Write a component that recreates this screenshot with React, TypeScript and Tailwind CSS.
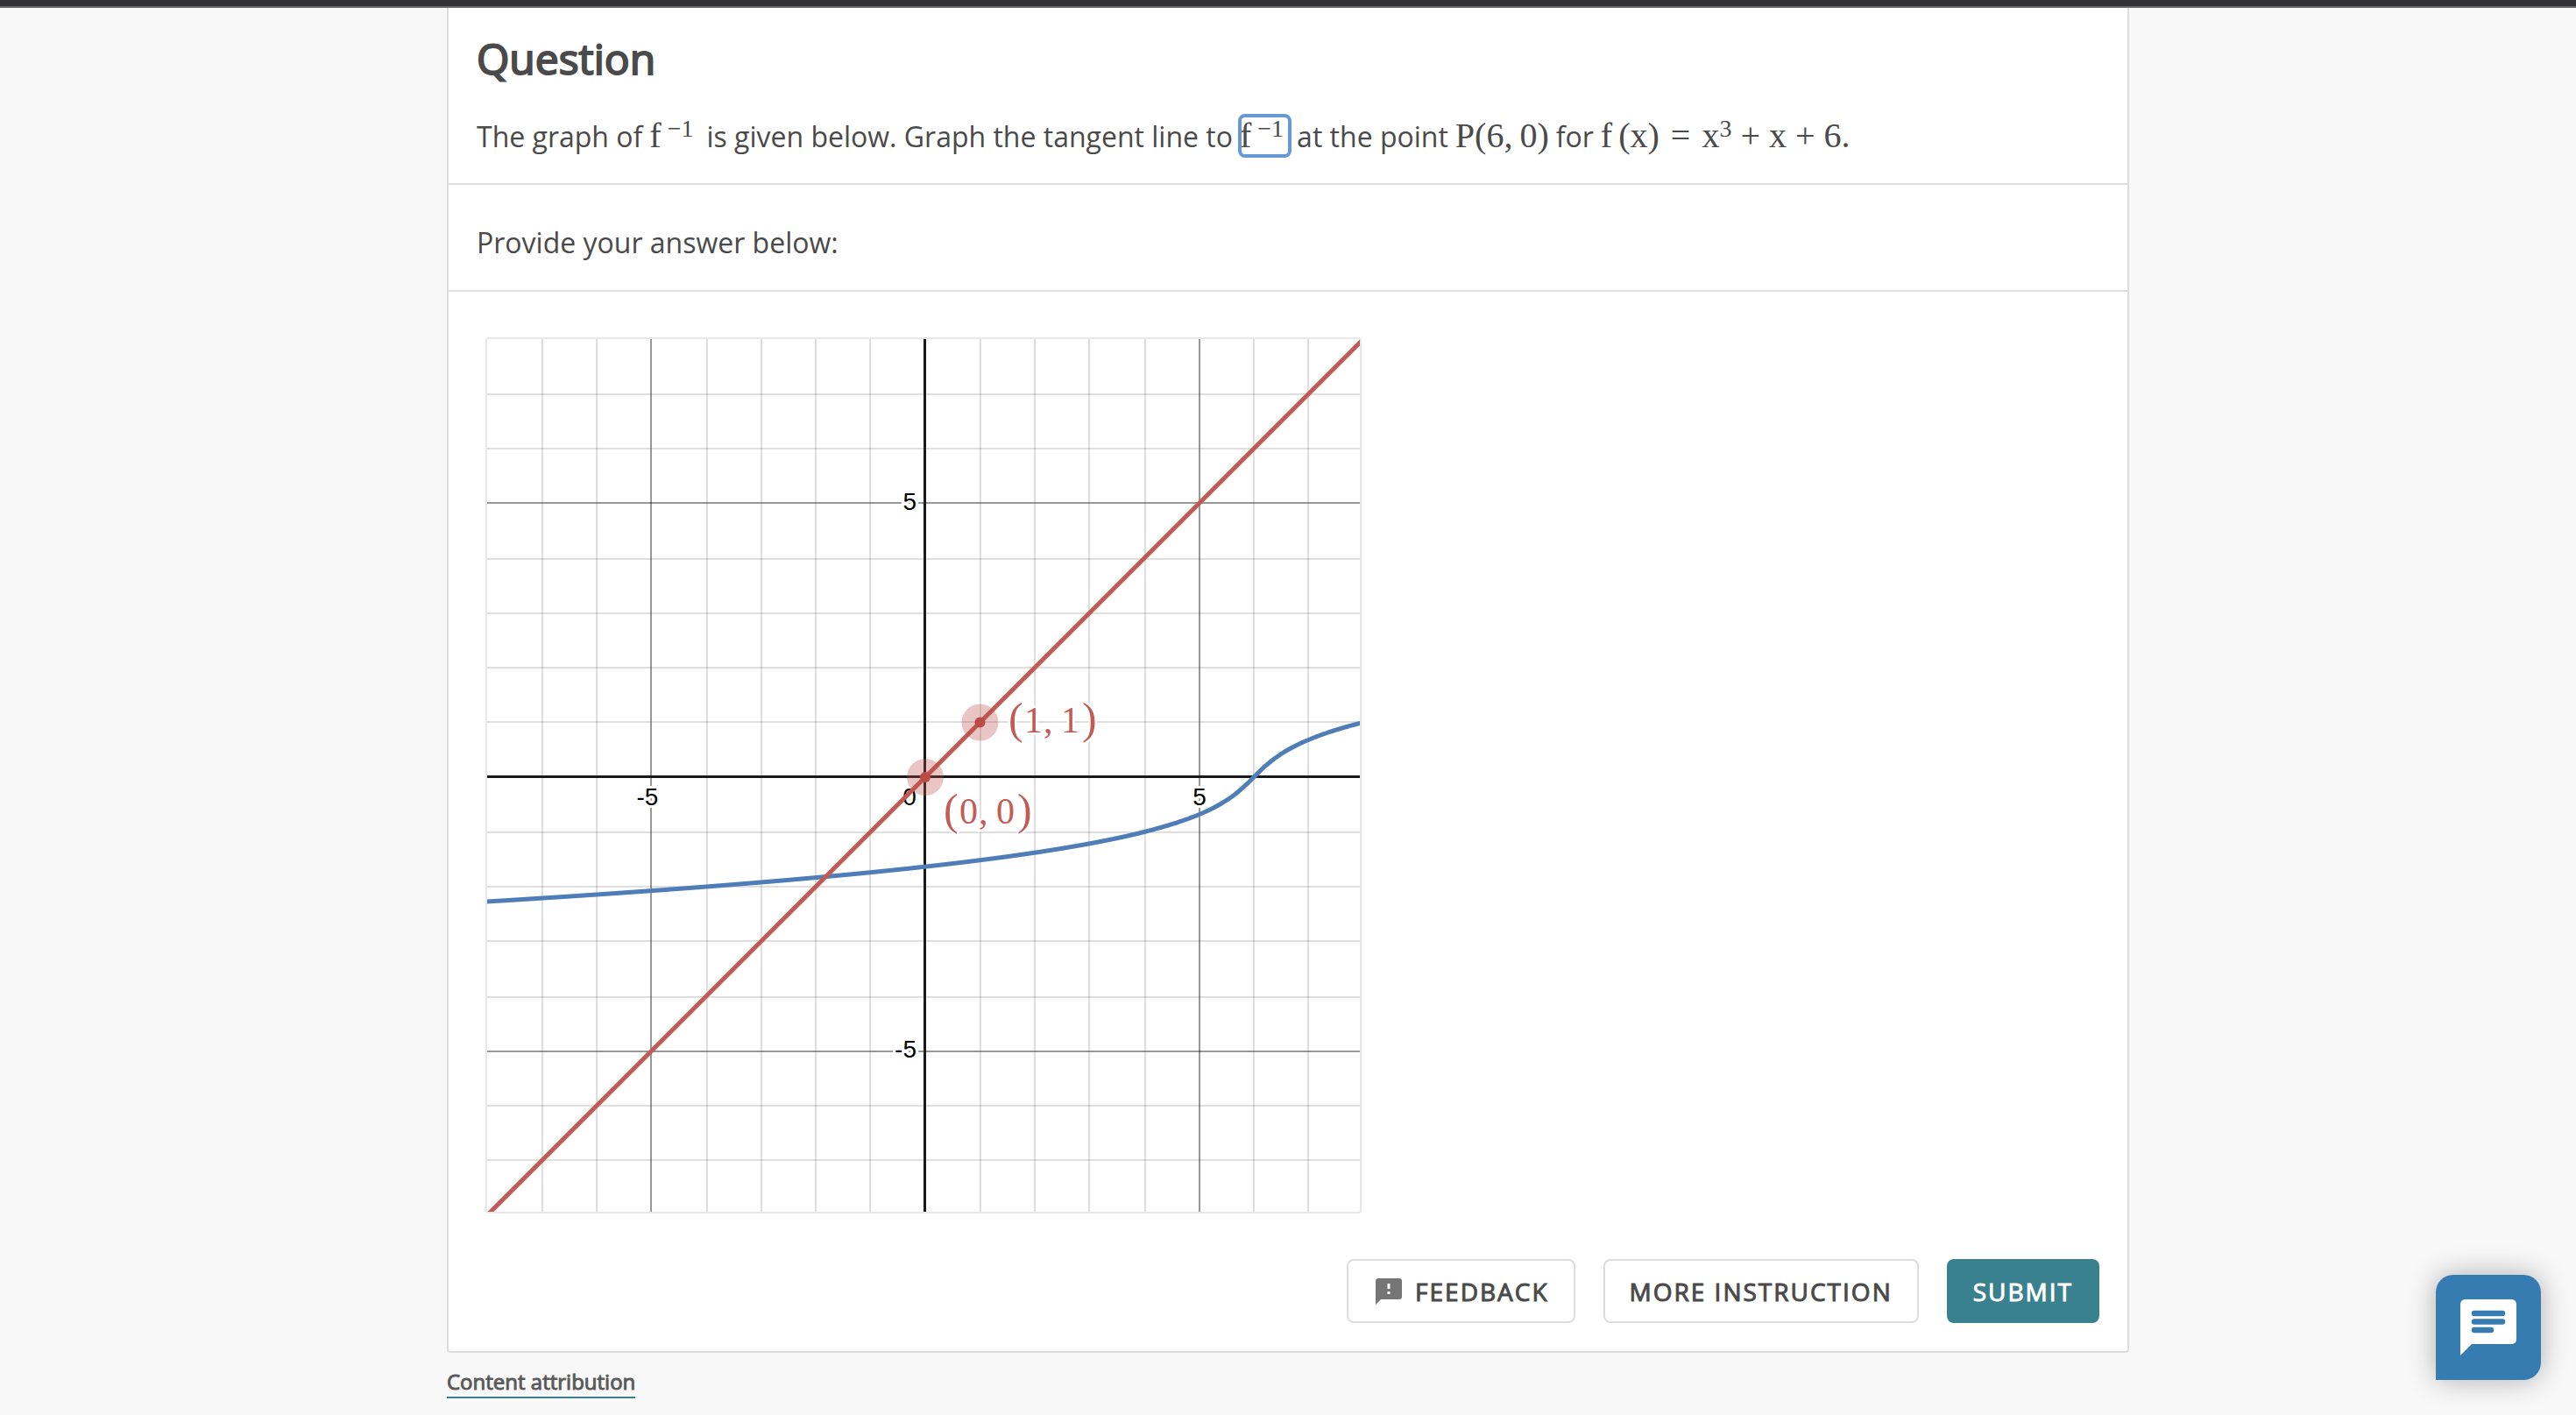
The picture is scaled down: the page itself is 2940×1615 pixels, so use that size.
import { MdFeedback } from 'react-icons/md'

const SIZE = 996
const ORIGIN = 500
const UNIT = 62.5

const toX = (x: number) => ORIGIN + x * UNIT
const toY = (y: number) => ORIGIN - y * UNIT

// grid lines are 2px wide, so keep their centres on odd pixels
const snap = (v: number) => 2 * Math.floor(v / 2) + 1

const TICKS = [-7, -6, -5, -4, -3, -2, -1, 1, 2, 3, 4, 5, 6, 7]

// x = y^3 + y + 6 is the graph of f inverse
function inversePath() {
  const points: string[] = []
  for (let y = -2.4; y <= 1.1; y += 0.02) {
    const x = y ** 3 + y + 6
    points.push(`${toX(x).toFixed(1)} ${toY(y).toFixed(1)}`)
  }
  return `M${points.join('L')}`
}

interface AxisLabelProps {
  x: number
  y: number
  anchor?: 'middle' | 'end'
  children: string
}

function AxisLabel({ x, y, anchor = 'middle', children }: AxisLabelProps) {
  return (
    <text
      x={x}
      y={y}
      textAnchor={anchor}
      className="fill-black stroke-white stroke-[6px] font-['Liberation_Sans',sans-serif] text-[28px] [paint-order:stroke]"
    >
      {children}
    </text>
  )
}

interface PointProps {
  x: number
  y: number
  labelX: number
  labelY: number
}

function Point({ x, y, labelX, labelY }: PointProps) {
  return (
    <g className="fill-[#bc4b45]">
      <circle cx={toX(x)} cy={toY(y)} r={21} opacity={0.32} />
      <circle cx={toX(x)} cy={toY(y)} r={6} />
      <g className="stroke-white stroke-[5px] font-['Liberation_Serif',serif] [paint-order:stroke]" opacity={0.9}>
        <text x={labelX} y={labelY} className="text-[50px]">(</text>
        <text x={labelX + 18} y={labelY - 1} className="text-[42px]">{x}</text>
        <text x={labelX + 40} y={labelY - 1} className="text-[42px]">,</text>
        <text x={labelX + 60} y={labelY - 1} className="text-[42px]">{y}</text>
        <text x={labelX + 84} y={labelY} className="text-[50px]">)</text>
      </g>
    </g>
  )
}

function Graph() {
  return (
    <div className="w-fit rounded-sm border-2 border-[#e8e8e8]">
      <svg
        width={SIZE}
        height={SIZE}
        viewBox={`0 0 ${SIZE} ${SIZE}`}
        role="img"
        aria-label="Graph of the inverse function with a movable line"
        className="block"
      >
        {TICKS.map((t) => (
          <g key={t} stroke="#000" strokeWidth={2} opacity={t % 5 === 0 ? 0.4 : 0.12}>
            <line x1={snap(toX(t))} x2={snap(toX(t))} y1={0} y2={SIZE} />
            <line x1={0} x2={SIZE} y1={snap(toY(t))} y2={snap(toY(t))} />
          </g>
        ))}

        {/* Axes */}
        <path d={`M499.5 0V${SIZE}M0 499.5H${SIZE}`} stroke="#1a1a1a" strokeWidth={3} />
        <AxisLabel x={183} y={532}>-5</AxisLabel>
        <AxisLabel x={482} y={532}>0</AxisLabel>
        <AxisLabel x={813} y={532}>5</AxisLabel>
        <AxisLabel x={490} y={195} anchor="end">5</AxisLabel>
        <AxisLabel x={490} y={820} anchor="end">-5</AxisLabel>

        {/* Curves */}
        <path d={inversePath()} fill="none" stroke="#4f7db8" strokeWidth={5} />
        <line x1={toX(-9)} y1={toY(-9)} x2={toX(9)} y2={toY(9)} stroke="#c15a54" strokeWidth={5} />

        <Point x={1} y={1} labelX={595} labelY={450} />
        <Point x={0} y={0} labelX={521} labelY={554} />
      </svg>
    </div>
  )
}

const mathClass = "font-['Liberation_Serif',serif] text-[40px] leading-[46px]"
const superClass = 'inline-block -translate-y-3 text-[28px] leading-none'

function InverseF() {
  return (
    <>
      f<span className={`${superClass} ml-[7px]`}>−1</span>
    </>
  )
}

function ChatIcon() {
  return (
    <svg viewBox="0 0 64 64" className="size-16" aria-hidden="true">
      <path d="M6 0H58Q64 0 64 6V45Q64 51 58 51H13L0 64V6Q0 0 6 0Z" fill="#fff" />
      <path d="M16 16H48M16 25.5H48M16 35H35" stroke="#377cb1" strokeWidth={6.5} strokeLinecap="round" />
    </svg>
  )
}

const buttonClass =
  'flex h-[73px] cursor-pointer items-center rounded-lg border-2 px-7 text-[28px] tracking-[2px] uppercase [-webkit-text-stroke:1px]'

export default function App() {
  return (
    <div className="min-h-screen bg-[#f8f8f8] font-['Open_Sans',sans-serif] text-[#4a4a4a]">
      <header className="h-[9px] border-b-2 border-[#666a6c] bg-[#343438]" />

      <main className="mx-auto max-w-[1920px]">
        <div className="rounded-b-sm border-2 border-t-0 border-[#dddddd] bg-white">
          {/* Question */}
          <section className="border-b-2 border-[#dddddd] px-8 pt-6 pb-[22px]">
            <h1 className="text-[48px] leading-[68px] [-webkit-text-stroke:2px]">Question</h1>
            <p className="mt-6 flex h-[62px] items-baseline gap-2 text-[32px] leading-[62px] whitespace-nowrap">
              <span>The graph of</span>
              <span className={`${mathClass} pr-[7px]`}><InverseF /></span>
              <span>is given below. Graph the tangent line to</span>
              <span className={`${mathClass} rounded-md pr-[7px] outline-4 -outline-offset-2 outline-[#6699d5]`}>
                <InverseF />
              </span>
              <span>at the point</span>
              <span className={mathClass}>
                P(6,<span className="ml-2">0)</span>
              </span>
              <span>for</span>
              <span className={mathClass}>
                f<span className="ml-[7px]">(x)</span>
                <span className="mx-[13px]">=</span>
                x<span className={superClass}>3</span> + x + 6.
              </span>
            </p>
          </section>

          <section className="border-b-2 border-[#dddddd] px-8 pt-[42px] pb-[30px]">
            <p className="text-[32px] leading-[48px]">Provide your answer below:</p>
          </section>

          <section className="px-[42px] pt-[52px]">
            <Graph />
          </section>

          {/* Actions */}
          <div className="flex justify-end gap-8 px-8 pt-[52px] pb-8">
            <button type="button" className={`${buttonClass} gap-3 border-[#dddddd] bg-white`}>
              <MdFeedback className="size-9 text-[#757575]" />
              Feedback
            </button>
            <button type="button" className={`${buttonClass} border-[#dddddd] bg-white`}>
              More instruction
            </button>
            <button type="button" className={`${buttonClass} border-[#39818f] bg-[#39818f] text-white`}>
              Submit
            </button>
          </div>
        </div>

        <a
          href="#attribution"
          className="mt-4 inline-block border-b-2 border-[#39818f] text-[24px] leading-[34px] text-[#5a5a5a] [-webkit-text-stroke:1px]"
        >
          Content attribution
        </a>
      </main>

      <button
        type="button"
        aria-label="Open chat"
        className="fixed right-10 bottom-10 flex size-[120px] cursor-pointer items-center justify-center rounded-[20px] rounded-bl-none bg-[#377cb1] shadow-[0_0_32px_rgba(0,0,0,0.3)]"
      >
        <ChatIcon />
      </button>
    </div>
  )
}
